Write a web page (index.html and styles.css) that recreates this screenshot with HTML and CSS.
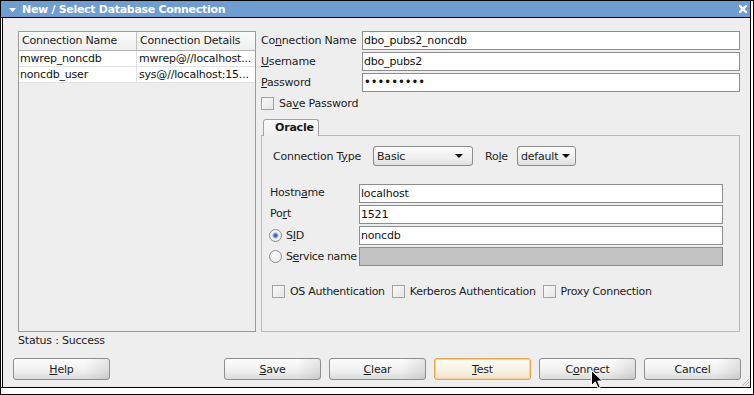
FILE: index.html
```html
<!DOCTYPE html>
<html>
<head>
<meta charset="utf-8">
<title>New / Select Database Connection</title>
<link rel="stylesheet" href="styles.css">
</head>
<body>
<div class="screen">
  <div class="dialog">
    <div class="titlebar">
      <svg class="t-arrow" width="7" height="4" viewBox="0 0 7 4"><path d="M0 0H7L3.5 4Z" fill="#fff"/></svg>
      <span class="t-text">New / Select Database Connection</span>
      <svg class="t-close" width="8" height="8" viewBox="0 0 8 8"><path d="M1 1L7 7M7 1L1 7" stroke="#fff" stroke-width="2.4" stroke-linecap="square"/></svg>
    </div>
    <div class="content">
      <div class="main">
        <div class="list">
          <div class="lrow lhead"><div class="c1">Connection Name</div><div class="c2">Connection Details</div></div>
          <div class="lrow"><div class="c1">mwrep_noncdb</div><div class="c2">mwrep@//localhost...</div></div>
          <div class="lrow"><div class="c1">noncdb_user</div><div class="c2">sys@//localhost:15...</div></div>
        </div>
        <div class="right">
          <div class="form">
            <span class="lbl">Co<u>n</u>nection Name</span><div class="input">dbo_pubs2_noncdb</div>
            <span class="lbl"><u>U</u>sername</span><div class="input">dbo_pubs2</div>
            <span class="lbl"><u>P</u>assword</span><div class="input pw">•••••••••</div>
          </div>
          <div class="savepw"><span class="cb"></span><span>Sa<u>v</u>e Password</span></div>
          <div class="tabs"><div class="tab">Oracle</div></div>
          <div class="panel">
            <div class="ctype">
              <span class="ct-lbl">Connection T<u>y</u>pe</span>
              <div class="select sel-basic"><span>Basic</span><svg width="8" height="4" viewBox="0 0 8 4"><path d="M0 0H8L4 4Z" fill="#000"/></svg></div>
              <span class="role-lbl">Ro<u>l</u>e</span>
              <div class="select sel-role"><span>default</span><svg width="8" height="4" viewBox="0 0 8 4"><path d="M0 0H8L4 4Z" fill="#000"/></svg></div>
            </div>
            <div class="hgrid">
              <span class="lbl2">Hostn<u>a</u>me</span><div class="input">localhost</div>
              <span class="lbl2">Po<u>r</u>t</span><div class="input">1521</div>
              <span class="lbl2 rlbl"><span class="radio on"></span><span>S<u>I</u>D</span></span><div class="input">noncdb</div>
              <span class="lbl2 rlbl"><span class="radio"></span><span class="svc">S<u>e</u>rvice name</span></span><div class="input disabled"></div>
            </div>
            <div class="checks">
              <span class="cb"></span><span class="cl">OS Authentication</span>
              <span class="cb"></span><span class="cl">Kerberos Authentication</span>
              <span class="cb"></span><span class="cl">Proxy Connection</span>
            </div>
          </div>
        </div>
      </div>
      <div class="status">Status : Success</div>
      <div class="buttons">
        <div class="btn"><span><u>H</u>elp</span></div>
        <div class="spacer"></div>
        <div class="btn"><span><u>S</u>ave</span></div>
        <div class="btn"><span><u>C</u>lear</span></div>
        <div class="btn focus"><span><u>T</u>est</span></div>
        <div class="btn"><span>C<u>o</u>nnect</span></div>
        <div class="btn"><span>Cancel</span></div>
      </div>
    </div>
    <svg class="grip" width="9" height="9" viewBox="0 0 9 9"><path d="M8 1L1 8M8 4L4 8M8 7L7 8" stroke="#bdbdbd" stroke-width="1"/></svg>
  </div>
  <svg class="cursor" width="13" height="20" viewBox="0 0 13 20"><path d="M0.5 0.5V15.5L4.3 11.8L7 18.2L9.3 17.2L6.7 11H11.5Z" fill="#000" stroke="#fff" stroke-width="1"/></svg>
</div>
</body>
</html>
```
FILE: styles.css
```css
* { box-sizing: border-box; }
body {
  margin: 0;
  background: #fff;
  font-family: "DejaVu Sans", "Liberation Sans", sans-serif;
  font-size: 11px;
  letter-spacing: -0.2px;
  color: #1c1c1c;
}
u { text-decoration: underline; text-underline-offset: 1px; text-decoration-thickness: 1px; }

.screen {
  width: 754px;
  height: 395px;
  border: 1px solid #000;
  padding: 0 2px 6px 0;
  background: #fff;
  position: relative;
}
.dialog {
  width: 750px;
  height: 387px;
  border-right: 1px solid #000;
  border-bottom: 1px solid #000;
  background: #eeeeee;
  display: flex;
  flex-direction: column;
  position: relative;
}
.titlebar {
  height: 17px;
  border-bottom: 1px solid #000;
  background: #6f9dcf;
  display: flex;
  align-items: center;
  padding-left: 8px;
  color: #fff;
}
.t-arrow { margin-right: 6px; margin-top: 1px; }
.t-text { font-weight: bold; font-size: 11px; letter-spacing: -0.3px; }
.t-close { margin-left: auto; margin-right: 3px; }

.content {
  flex: 1;
  box-shadow: inset 1px 0 #fff, inset 2px 0 #000;
  padding: 13px 9px 7px 12px;
  display: flex;
  flex-direction: column;
}
.main {
  display: flex;
  gap: 5px;
  margin: 0 1px 0 5px;
  height: 301px;
}
.list {
  width: 238px;
  border: 1px solid #9a9a9a;
  background: #eeeeee;
}
.lrow {
  display: flex;
  height: 16px;
  border-bottom: 1px solid #e2e2e2;
  background: #fff;
  line-height: 15px;
  color: #111;
}
.lrow .c1 { width: 118px; border-right: 1px solid #e2e2e2; padding-left: 1px; white-space: nowrap; overflow: hidden; }
.lrow .c2 { flex: 1; padding-left: 2px; white-space: nowrap; overflow: hidden; }
.lrow.lhead {
  height: 19px;
  line-height: 18px;
  border-bottom: 1px solid #b4b4b4;
  background: linear-gradient(#fbfbfb, #efefef);
  color: #222;
}
.lhead .c1 { border-right-color: #c4c4c4; padding-left: 3px; }
.lhead .c2 { padding-left: 3px; }

.right {
  width: 479px;
  display: flex;
  flex-direction: column;
}
.form {
  display: grid;
  grid-template-columns: 101px 378px;
  grid-auto-rows: 19px;
  row-gap: 2px;
  align-items: center;
}
.lbl { white-space: nowrap; }
.input {
  height: 19px;
  border: 1px solid #8d8d8d;
  background: #fff;
  padding-left: 1px;
  line-height: 17px;
  color: #111;
  white-space: nowrap;
}
.input.pw { font-size: 11.5px; letter-spacing: 0; line-height: 16px; padding-left: 1px; }
.input.disabled { background: #c3c3c3; }

.cb {
  width: 13px;
  height: 13px;
  border: 1px solid #a3a3a3;
  background: linear-gradient(135deg, #fafafa, #e6e6e6);
  display: inline-block;
  flex: none;
}
.savepw {
  margin-top: 4px;
  height: 14px;
  display: flex;
  align-items: center;
  gap: 5px;
}
.tabs {
  margin-top: 9px;
  height: 17px;
  border-bottom: 1px solid #b9b9b9;
  display: flex;
  padding-left: 2px;
}
.tab {
  width: 56px;
  height: 17px;
  margin-bottom: -1px;
  border: 1px solid #a2a2a2;
  border-bottom: none;
  border-radius: 3px 3px 0 0;
  background: linear-gradient(#fbfbfb, #eeeeee);
  font-weight: bold;
  padding-left: 11px;
  line-height: 15px;
  color: #1a1a1a;
}
.panel {
  height: 196px;
  border: 1px solid #b9b9b9;
  border-top: none;
  padding: 10px 0 0 8px;
}
.ctype {
  display: flex;
  align-items: center;
  height: 20px;
  margin-left: 3px;
}
.ct-lbl { width: 100px; white-space: nowrap; }
.select {
  height: 20px;
  border: 1px solid #8b8b8b;
  border-radius: 3px;
  background: linear-gradient(#fdfdfd, #ececec 70%, #dedede);
  display: flex;
  align-items: center;
  padding: 0 0 0 3px;
}
.select span { flex: 1; padding-top: 1px; white-space: nowrap; }
.sel-basic { width: 100px; }
.sel-basic svg { margin-right: 9px; }
.sel-role { width: 59px; }
.sel-role svg { margin-right: 5px; flex: none; }
.role-lbl { margin-left: 12px; width: 32px; }

.hgrid {
  margin-top: 18px;
  display: grid;
  grid-template-columns: 89px 364px;
  grid-auto-rows: 19px;
  row-gap: 2px;
  align-items: center;
}
.lbl2 { padding-bottom: 2px; white-space: nowrap; }
.rlbl { display: flex; align-items: center; gap: 4px; margin-left: -1px; padding-bottom: 0; }
.svc { letter-spacing: -0.4px; }
.radio {
  width: 13px;
  height: 13px;
  border-radius: 50%;
  border: 1px solid #8f8f8f;
  background: radial-gradient(circle at 40% 35%, #ffffff, #e2e2e2);
  display: inline-block;
  flex: none;
}
.radio.on {
  background: radial-gradient(circle, #3f5f9f 0, #4d6fb0 1.6px, #b9c9e6 2.6px, #f4f6fa 4px, #e4e4e4 100%);
}
.checks {
  margin-top: 19px;
  margin-left: 2px;
  display: flex;
  align-items: center;
  height: 13px;
}
.checks .cl { margin-left: 5px; margin-right: 7px; white-space: nowrap; letter-spacing: -0.3px; }

.status {
  height: 18px;
  line-height: 18px;
  margin-left: 5px;
  color: #1c1c1c;
}
.buttons {
  margin-top: 8px;
  height: 22px;
  display: flex;
  gap: 8px;
}
.spacer { flex: 1; }
.btn {
  width: 97px;
  height: 22px;
  border: 1px solid #8e8e8e;
  border-radius: 3px;
  background:
    linear-gradient(to right, rgba(0,0,0,0) 75%, rgba(0,0,0,0.09)),
    linear-gradient(#fdfdfd, #f1f1f1 55%, #dcdcdc);
  display: flex;
  align-items: center;
  justify-content: center;
  color: #1c1c1c;
}
.btn.focus {
  border-color: #e8a24c;
  box-shadow: inset 0 0 0 1px #f6d49c;
  background: linear-gradient(#fffdf7, #f7f1e4 60%, #efe3c8);
}

.grip { position: absolute; right: 0; bottom: 0; }
.cursor { position: absolute; left: 590px; top: 369px; }
```
